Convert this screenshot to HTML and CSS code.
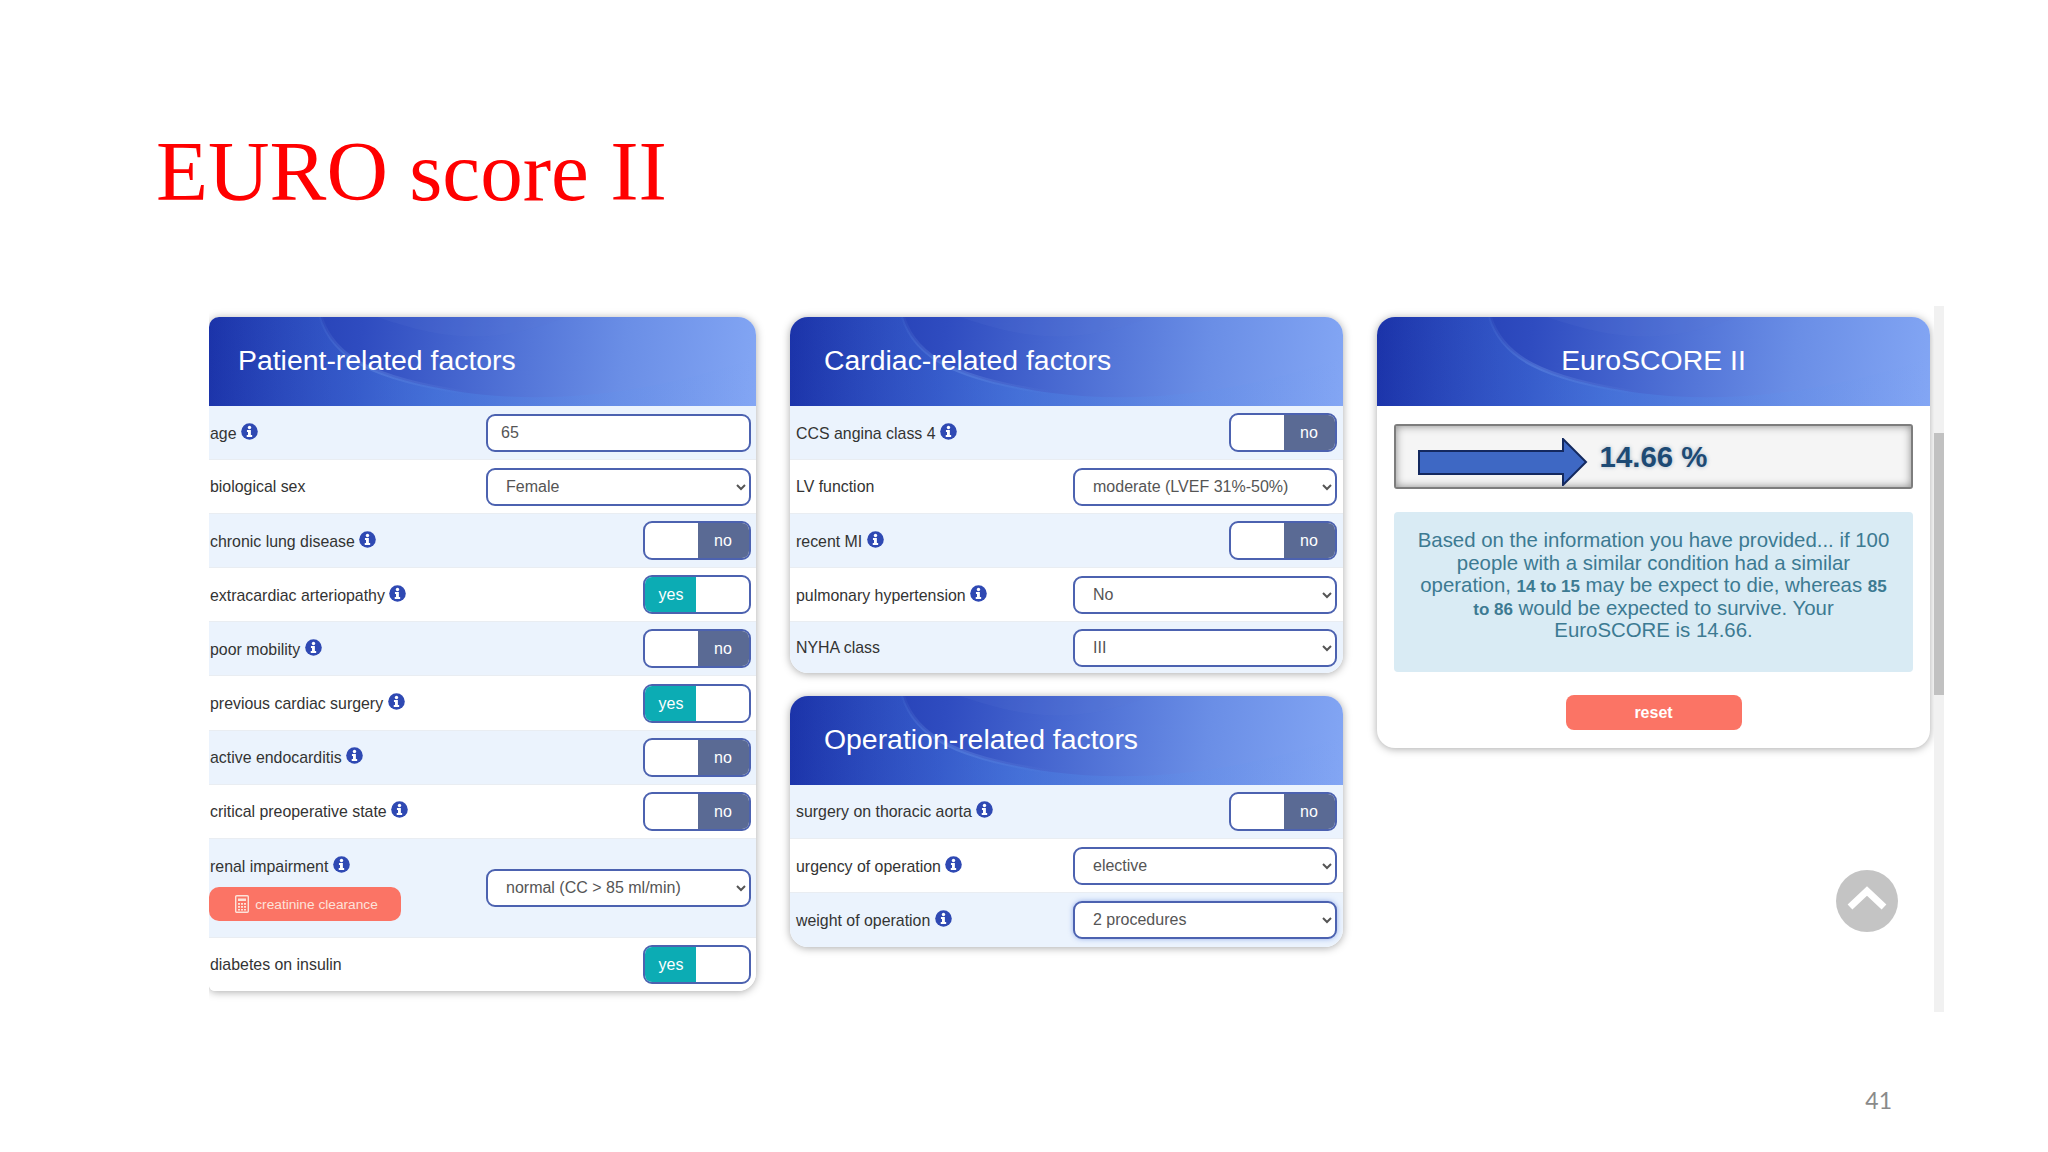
FILE: index.html
```html
<!DOCTYPE html>
<html lang="en">
<head>
  <meta charset="UTF-8">
  <title>EURO score II</title>
  <link rel="stylesheet" href="styles.css">
</head>
<body>
  <svg class="defs" width="0" height="0">
    <defs>
      <linearGradient id="glow" x1="0" y1="0" x2="1" y2="0">
        <stop offset="0" stop-color="#4a86e8" stop-opacity="0"/>
        <stop offset=".42" stop-color="#4a86e8" stop-opacity=".42"/>
        <stop offset="1" stop-color="#6f9cf0" stop-opacity="0"/>
      </linearGradient>
      <linearGradient id="edge" x1="0" y1="0" x2="1" y2="1">
        <stop offset="0" stop-color="#7fa8f0" stop-opacity=".05"/>
        <stop offset=".5" stop-color="#7fa8f0" stop-opacity=".3"/>
        <stop offset="1" stop-color="#7fa8f0" stop-opacity="0"/>
      </linearGradient>
    </defs>
    <symbol id="info" viewBox="0 0 16 16">
      <circle cx="8" cy="8" r="7.8" fill="#2f49b3"/>
      <circle cx="8" cy="4.2" r="1.6" fill="#fff"/>
      <path d="M5.6 6.7h3.7v4.6h1.2v1.9H5.4v-1.9h1.2V8.5h-1z" fill="#fff"/>
    </symbol>
    <symbol id="wave" viewBox="0 0 553 89" preserveAspectRatio="none">
      <path d="M113 0C125 40 165 62 262 76C340 86 440 80 553 40V89H0V0Z" fill="url(#glow)"/>
      <path d="M113 0C125 40 165 62 262 76" fill="none" stroke="url(#edge)" stroke-width="4"/>
      <path d="M170 0C240 24 290 28 360 0Z" fill="#5f7bd8" opacity=".14"/>
    </symbol>
  </svg>

  <h1 class="slide-title">EURO score II</h1>

  <div class="board">
    <div class="col col-left">
      <section class="card card-left">
        <div class="card-head">
          <svg class="wave"><use href="#wave"/></svg>
          <h2>Patient-related factors</h2>
        </div>
        <div class="row alt">
          <span class="label">age <svg class="info"><use href="#info"/></svg></span>
          <input class="field" type="text" value="65">
        </div>
        <div class="row">
          <span class="label">biological sex</span>
          <select class="field"><option>Female</option></select>
        </div>
        <div class="row alt">
          <span class="label">chronic lung disease <svg class="info"><use href="#info"/></svg></span>
          <div class="toggle"><span></span><span class="off">no</span></div>
        </div>
        <div class="row">
          <span class="label">extracardiac arteriopathy <svg class="info"><use href="#info"/></svg></span>
          <div class="toggle"><span class="on">yes</span><span></span></div>
        </div>
        <div class="row alt">
          <span class="label">poor mobility <svg class="info"><use href="#info"/></svg></span>
          <div class="toggle"><span></span><span class="off">no</span></div>
        </div>
        <div class="row">
          <span class="label">previous cardiac surgery <svg class="info"><use href="#info"/></svg></span>
          <div class="toggle"><span class="on">yes</span><span></span></div>
        </div>
        <div class="row alt">
          <span class="label">active endocarditis <svg class="info"><use href="#info"/></svg></span>
          <div class="toggle"><span></span><span class="off">no</span></div>
        </div>
        <div class="row">
          <span class="label">critical preoperative state <svg class="info"><use href="#info"/></svg></span>
          <div class="toggle"><span></span><span class="off">no</span></div>
        </div>
        <div class="row alt row-tall">
          <div class="label-stack">
            <span class="label">renal impairment <svg class="info"><use href="#info"/></svg></span>
            <button class="btn-clearance">
              <svg class="calc" viewBox="0 0 14 18">
                <rect x=".7" y=".7" width="12.6" height="16.6" rx="1" fill="none" stroke="#fde3da" stroke-width="1.4"/>
                <path d="M3 3.5h8v2.6H3zM3 8h2v1.8H3zM6 8h2v1.8H6zM9 8h2v1.8H9zM3 11h2v1.8H3zM6 11h2v1.8H6zM9 11h2v1.8H9zM3 14h2v1.6H3zM6 14h2v1.6H6zM9 14h2v1.6H9z" fill="#fde3da"/>
              </svg>
              creatinine clearance
            </button>
          </div>
          <select class="field"><option>normal (CC &gt; 85 ml/min)</option></select>
        </div>
        <div class="row row-last">
          <span class="label">diabetes on insulin</span>
          <div class="toggle"><span class="on">yes</span><span></span></div>
        </div>
      </section>
    </div>

    <div class="col col-mid">
      <section class="card">
        <div class="card-head">
          <svg class="wave"><use href="#wave"/></svg>
          <h2>Cardiac-related factors</h2>
        </div>
        <div class="row alt">
          <span class="label">CCS angina class 4 <svg class="info"><use href="#info"/></svg></span>
          <div class="toggle"><span></span><span class="off">no</span></div>
        </div>
        <div class="row">
          <span class="label">LV function</span>
          <select class="field"><option>moderate (LVEF 31%-50%)</option></select>
        </div>
        <div class="row alt">
          <span class="label">recent MI <svg class="info"><use href="#info"/></svg></span>
          <div class="toggle"><span></span><span class="off">no</span></div>
        </div>
        <div class="row">
          <span class="label">pulmonary hypertension <svg class="info"><use href="#info"/></svg></span>
          <select class="field"><option>No</option></select>
        </div>
        <div class="row alt row-short">
          <span class="label">NYHA class</span>
          <select class="field"><option>III</option></select>
        </div>
      </section>

      <section class="card">
        <div class="card-head">
          <svg class="wave"><use href="#wave"/></svg>
          <h2>Operation-related factors</h2>
        </div>
        <div class="row alt">
          <span class="label">surgery on thoracic aorta <svg class="info"><use href="#info"/></svg></span>
          <div class="toggle"><span></span><span class="off">no</span></div>
        </div>
        <div class="row">
          <span class="label">urgency of operation <svg class="info"><use href="#info"/></svg></span>
          <select class="field"><option>elective</option></select>
        </div>
        <div class="row alt row-last">
          <span class="label">weight of operation <svg class="info"><use href="#info"/></svg></span>
          <select class="field field-focus"><option>2 procedures</option></select>
        </div>
      </section>
    </div>

    <div class="col col-right">
      <section class="card">
        <div class="card-head">
          <svg class="wave"><use href="#wave"/></svg>
          <h2 class="center">EuroSCORE II</h2>
        </div>
        <div class="result-body">
          <div class="score-box">
            <svg class="arrow" viewBox="0 0 170 48">
              <path d="M1 13H145V1L168 24L145 47V36H1Z" fill="#3e68c4" stroke="#14295f" stroke-width="2"/>
            </svg>
            14.66 %
          </div>
          <div class="result-text">
            Based on the information you have provided... if 100 people with a similar condition had a similar operation, <b>14 to 15</b> may be expect to die, whereas <b>85 to 86</b> would be expected to survive. Your EuroSCORE is 14.66.
          </div>
          <button class="btn-reset">reset</button>
        </div>
      </section>
    </div>

    <div class="scrollbar"><div class="thumb"></div></div>

    <button class="to-top">
      <svg viewBox="0 0 40 24" width="40" height="24">
        <path d="M3 21L20 5L37 21" fill="none" stroke="#fff" stroke-width="7"/>
      </svg>
    </button>
  </div>

  <div class="page-num">41</div>
</body>
</html>
```

FILE: styles.css
```css
*{
  margin: 0;
  padding: 0;
  box-sizing: border-box;
}
body{
  width: 2048px;
  height: 1152px;
  background: #fff;
  font-family: "Liberation Sans", Arial, sans-serif;
  overflow: hidden;
}
.defs{
  display: block;
  height: 0;
}
.slide-title{
  height: 100px;
  margin-top: 121px;
  padding-left: 156px;
  font-family: "Liberation Serif", "Times New Roman", serif;
  font-size: 85.2px;
  line-height: 100px;
  font-weight: 400;
  color: #ff0000;
}
.board{
  position: relative;
  display: flex;
  height: 706px;
  margin-top: 85px;
  padding-left: 209px;
}
.col{
  display: flex;
  flex-direction: column;
  gap: 23px;
  padding-top: 11px;
}
.col-left{
  width: 547px;
}
.col-mid{
  width: 553px;
  margin-left: 34px;
}
.col-right{
  width: 553px;
  margin-left: 34px;
}
.card{
  background: #fff;
  border-radius: 18px;
  box-shadow: 0 1px 9px rgba(0,0,0,.34);
  overflow: hidden;
}
.card-left{
  border-radius: 10px 18px 18px 6px;
  clip-path: inset(-20px -20px -20px 0);
}
.card-head{
  position: relative;
  height: 89px;
  background: linear-gradient(97deg, #1b33a9 0%, #2f4cc0 28%, #4a6bd2 50%, #6a8ee6 75%, #83a6f4 100%);
}
.card-head h2{
  position: relative;
  padding-left: 34px;
  font-size: 28.4px;
  font-weight: 400;
  line-height: 87px;
  color: #fff;
}
.card-left .card-head h2{
  padding-left: 29px;
}
.card-head h2.center{
  padding-left: 0;
  text-align: center;
}
.wave{
  position: absolute;
  top: 0;
  left: 0;
  width: 100%;
  height: 100%;
}
.row{
  display: flex;
  align-items: center;
  justify-content: space-between;
  height: 54.1px;
  padding: 0 6px;
  background: #fff;
  border-bottom: 1px solid #e9edf2;
}
.row.alt{
  background: #ebf3fd;
}
.row-tall{
  height: 99px;
}
.row-short{
  height: 50.5px;
  border-bottom: 0;
}
.row-last{
  height: 53.5px;
  border-bottom: 0;
}
.card-left .row{
  padding: 0 5px 0 1px;
}
.label{
  font-size: 15.9px;
  color: #333;
  white-space: nowrap;
}
.info{
  width: 17px;
  height: 17px;
  vertical-align: -1px;
}
.label-stack{
  display: flex;
  flex-direction: column;
  gap: 11px;
  margin-top: 2px;
}
.btn-clearance{
  display: flex;
  align-items: center;
  justify-content: center;
  gap: 6px;
  width: 192px;
  height: 34px;
  margin-left: -1px;
  border: 0;
  border-radius: 10px;
  background: #fb7465;
  color: #fde3da;
  font-family: inherit;
  font-size: 13.7px;
}
.calc{
  width: 14px;
  height: 18px;
  margin-left: 3px;
}
.field{
  width: 264px;
  height: 38px;
  padding-left: 13px;
  border: 2px solid #4c62b0;
  border-radius: 9px;
  background: #fff;
  color: #555;
  font-family: inherit;
  font-size: 16px;
}
select.field{
  padding-left: 14px;
}
.card-left .field{
  width: 265px;
}
.field-focus{
  box-shadow: 0 0 5px rgba(70,110,220,.5);
}
.toggle{
  display: flex;
  width: 108px;
  height: 39px;
  border: 2px solid #4c62b0;
  border-radius: 9px;
  background: #fff;
  overflow: hidden;
}
.toggle span{
  flex: 1;
  text-align: center;
  font-size: 16px;
  line-height: 35px;
  color: #fff;
}
.toggle .off{
  margin: -2px -2px -2px 0;
  line-height: 39px;
  text-indent: -3px;
  background: #5a6a94;
}
.toggle .on{
  margin: -2px 0 -2px -2px;
  line-height: 39px;
  text-indent: 3px;
  background: #0cacb4;
}
.result-body{
  padding: 18px 17px 18px;
  text-align: center;
}
.score-box{
  position: relative;
  height: 65px;
  border: 2px solid #7d7d7d;
  border-radius: 3px;
  background: #f5f5f5;
  box-shadow: inset 0 0 9px #8a8a8a;
  font-size: 29.4px;
  font-weight: 700;
  line-height: 61px;
  color: #1d4a74;
  text-shadow: 0 0 4px rgba(29,74,116,.35);
}
.arrow{
  position: absolute;
  top: 12px;
  left: 22px;
  width: 170px;
  height: 48px;
}
.result-text{
  height: 160px;
  margin-top: 23px;
  padding: 17px 20px;
  border-radius: 4px;
  background: #d9ebf4;
  font-size: 20.4px;
  line-height: 22.6px;
  color: #3c7a92;
}
.result-text b{
  font-size: 17px;
  line-height: 1;
}
.btn-reset{
  display: block;
  width: 176px;
  height: 35px;
  margin: 23px auto 0;
  border: 0;
  border-radius: 8px;
  background: #fb7465;
  color: #fff;
  font-family: inherit;
  font-size: 16px;
  font-weight: 700;
}
.scrollbar{
  width: 10px;
  margin-left: 4px;
  background: #f1f1f1;
}
.thumb{
  height: 262px;
  margin-top: 127px;
  background: #c1c1c1;
}
.to-top{
  position: absolute;
  top: 564px;
  left: 1836px;
  display: flex;
  align-items: center;
  justify-content: center;
  width: 62px;
  height: 62px;
  padding-bottom: 6px;
  border: 0;
  border-radius: 50%;
  background: #c4c4c4;
}
.page-num{
  margin-top: 73px;
  padding-right: 156px;
  font-family: Lato, "Open Sans", sans-serif;
  font-size: 23px;
  line-height: 30px;
  text-align: right;
  color: #8a8a8a;
}
```
